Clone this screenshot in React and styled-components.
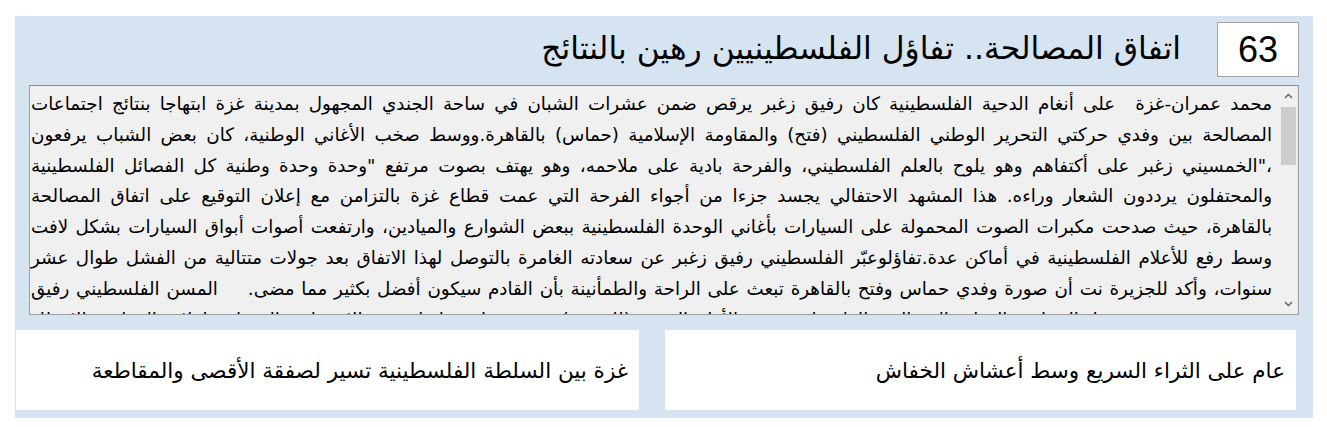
import React from "react";
import styled, { createGlobalStyle } from "styled-components";

// each entry is one visual row of the article box, "|" marks a wide gap
const articleLines = [
  "محمد عمران-غزة|على أنغام الدحية الفلسطينية كان رفيق زغبر يرقص ضمن عشرات الشبان في ساحة الجندي المجهول بمدينة غزة ابتهاجا بنتائج اجتماعات",
  "المصالحة بين وفدي حركتي التحرير الوطني الفلسطيني (فتح) والمقاومة الإسلامية (حماس) بالقاهرة.ووسط صخب الأغاني الوطنية، كان بعض الشباب يرفعون",
  "،\"الخمسيني زغبر على أكتفاهم وهو يلوح بالعلم الفلسطيني، والفرحة بادية على ملاحمه، وهو يهتف بصوت مرتفع \"وحدة وحدة وطنية كل الفصائل الفلسطينية",
  "والمحتفلون يرددون الشعار وراءه.  هذا المشهد الاحتفالي يجسد جزءا من أجواء الفرحة التي عمت قطاع غزة بالتزامن مع إعلان التوقيع على اتفاق المصالحة",
  "بالقاهرة، حيث صدحت مكبرات الصوت المحمولة على السيارات بأغاني الوحدة الفلسطينية ببعض الشوارع والميادين، وارتفعت أصوات أبواق السيارات بشكل لافت",
  "وسط رفع للأعلام الفلسطينية في أماكن عدة.تفاؤلوعبّر الفلسطيني رفيق زغبر عن سعادته الغامرة بالتوصل لهذا الاتفاق بعد جولات متتالية من الفشل طوال عشر",
  "سنوات، وأكد للجزيرة نت أن صورة وفدي حماس وفتح بالقاهرة تبعث على الراحة والطمأنينة بأن القادم سيكون أفضل بكثير مما مضى.|المسن الفلسطيني رفيق",
  "زغبر وهو يرقص وسط الشبان قال إن المصالحة الفلسطينية هي الأمل الوحيد (للغزيين) بعد سنوات طويلة من الانقسام والحصار وإغلاق المعابر والانتظار",
];

export default function App() {
  return (
    <>
      <GlobalStyle />
      <Page>
        <Panel dir="rtl">
          <Header>
            <NumberBox dir="ltr">63</NumberBox>
            <Title>اتفاق المصالحة.. تفاؤل الفلسطينيين رهين بالنتائج</Title>
          </Header>
          <ArticleBox>
            <ScrollBar>
              <Arrow viewBox="0 0 9 6">
                <path d="M1 5 L4.5 1.5 L8 5" />
              </Arrow>
              <Track>
                <Thumb />
              </Track>
              <Arrow viewBox="0 0 9 6">
                <path d="M1 1 L4.5 4.5 L8 1" />
              </Arrow>
            </ScrollBar>
            <ArticleText>
              {articleLines.map((line, key) => {
                const parts = line.split("|");
                return (
                  <Line key={key}>
                    {parts.map((part, i) => (
                      <React.Fragment key={i}>
                        {i > 0 && <Gap $wide={key === 6} />}
                        {part}
                      </React.Fragment>
                    ))}
                  </Line>
                );
              })}
            </ArticleText>
          </ArticleBox>
          <Related>
            <RelatedCard $width={631}>عام على الثراء السريع وسط أعشاش الخفاش</RelatedCard>
            <RelatedCard $width={623}>
              غزة بين السلطة الفلسطينية تسير لصفقة الأقصى والمقاطعة
            </RelatedCard>
          </Related>
        </Panel>
      </Page>
    </>
  );
}

const GlobalStyle = createGlobalStyle`
  html, body {
    margin: 0;
    background: #ffffff;
    font-family: "DejaVu Sans", "Liberation Sans", sans-serif;
  }
`;

const Page = styled.div`
  padding: 16px 14px 9px 15px;
`;

const Panel = styled.div`
  width: 1298px;
  height: 402px;
  box-sizing: border-box;
  background: #d6e4f1;
  display: flex;
  flex-direction: column;
  padding-top: 6px;
`;

const Header = styled.div`
  display: flex;
  align-items: center;
  gap: 36px;
  padding: 0 14px;
  height: 55px;
`;

const NumberBox = styled.div`
  width: 82px;
  height: 55px;
  box-sizing: border-box;
  border: 1px solid #a3a3a3;
  background: #ffffff;
  display: flex;
  align-items: center;
  justify-content: center;
  font-family: "Liberation Sans", Arial, sans-serif;
  font-size: 36px;
  color: #000000;
`;

const Title = styled.h1`
  margin: 0 0 3px;
  font-weight: normal;
  font-size: 31.4px;
  color: #000000;
  white-space: nowrap;
`;

const ArticleBox = styled.div`
  margin: 8px 14px 0 14px;
  height: 230px;
  box-sizing: border-box;
  border: 1px solid #a0a0a0;
  border-top-color: #8c8c8c;
  background: #f0f0f0;
  display: flex;
  overflow: hidden;
`;

const ArticleText = styled.div`
  flex: 1;
  min-width: 0;
  padding: 3px 8px 0 1px;
  overflow: hidden;
`;

const Line = styled.div`
  white-space: nowrap;
  text-align: justify;
  text-align-last: justify;
  font-size: 18.3px;
  line-height: 30.8px;
  height: 30.8px;
  color: #000000;
`;

const Gap = styled.span`
  display: inline-block;
  width: ${(props) => (props.$wide ? "30px" : "20px")};
`;

const ScrollBar = styled.div`
  width: 17px;
  flex-shrink: 0;
  display: flex;
  flex-direction: column;
  align-items: center;
  background: #f0f0f0;
  border-right: 1px solid #e4e4e4;
`;

const Arrow = styled.svg`
  width: 9px;
  height: 6px;
  margin: 7px 0;
  fill: none;
  stroke: #606060;
  stroke-width: 1.4;
`;

const Track = styled.div`
  flex: 1;
  width: 100%;
`;

const Thumb = styled.div`
  width: 15px;
  height: 58px;
  margin: 1px auto 0;
  background: #cdcdcd;
`;

const Related = styled.div`
  margin-top: 15px;
  display: flex;
  gap: 26px;
  padding: 0 17px 0 1px;
`;

const RelatedCard = styled.div`
  width: ${(props) => props.$width}px;
  box-sizing: border-box;
  height: 80px;
  background: #ffffff;
  display: flex;
  align-items: center;
  padding: 0 11px;
  font-size: 21.5px;
  color: #000000;
  white-space: nowrap;
`;
